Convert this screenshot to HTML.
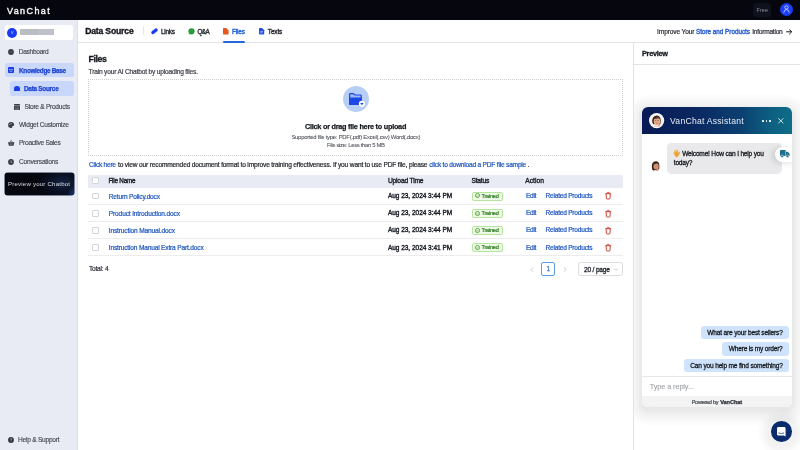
<!DOCTYPE html>
<html><head><meta charset="utf-8">
<style>
*{box-sizing:border-box;margin:0;padding:0}
html,body{width:800px;height:450px;overflow:hidden;background:#fff;font-family:"Liberation Sans",sans-serif;color:#1f2329}
.a{position:absolute}
.t{position:absolute;white-space:pre;line-height:10px;height:10px;font-family:"Liberation Sans",sans-serif}
svg{position:absolute;overflow:visible}

</style></head><body>
<!-- top bar -->
<div class="a" style="left:0;top:0;width:800px;height:19.6px;background:#05060e"></div>
<div class="a" style="left:753.1px;top:3px;width:18px;height:13.5px;border-radius:3px;background:#0f121c"></div>
<div class="a" style="left:779.8px;top:3px;width:13.4px;height:13.4px;border-radius:50%;background:#1b3df5"></div>
<svg style="left:781px;top:4.2px" width="11" height="11" viewBox="0 0 11 11"><circle cx="5.5" cy="3.5" r="1.7" fill="none" stroke="#fff" stroke-width="0.7"/><path d="M2.7 8.6 Q3.6 5.6 5.5 5.4 Q7.4 5.6 8.3 8.6" fill="none" stroke="#fff" stroke-width="0.7"/></svg>

<!-- sidebar -->
<div class="a" style="left:0;top:19.6px;width:78px;height:430.4px;background:#e8ebf4;border-right:0.8px solid #dcdfe8"></div>
<div class="a" style="left:5px;top:25px;width:68px;height:14.7px;background:#fff;border-radius:2.5px"></div>
<div class="a" style="left:6.9px;top:27.5px;width:10.3px;height:10.3px;border-radius:50%;background:#1a3cf0"></div>
<div class="t" style="left:10.5px;top:27.4px;font-size:5px;color:#c4ccff;will-change:transform">v</div>
<div class="a" style="left:20px;top:29px;width:34px;height:6px;background:#b8bcc3"></div>
<div class="a" style="left:38px;top:29px;width:16px;height:6px;background:#bec2c8"></div>

<svg style="left:8.4px;top:49px" width="6" height="6" viewBox="0 0 6 6"><circle cx="3" cy="3" r="2.9" fill="#3a3d44"/><path d="M2.4 3.6 L4.2 1.8" stroke="#8a8d94" stroke-width="0.6"/></svg>
<div class="a" style="left:5px;top:62.7px;width:68.5px;height:14.6px;background:#c8d7fa;border-radius:2.5px"></div>
<svg style="left:8.3px;top:67.3px" width="6" height="6" viewBox="0 0 6 6"><rect x="0" y="0" width="6" height="6" rx="0.8" fill="#1b3fe2"/><path d="M0.8 2.6 H5.2 M1.6 4 L3 4.6 L4.4 4" stroke="#c8d7fa" stroke-width="0.6" fill="none"/></svg>
<div class="a" style="left:10px;top:81px;width:63.5px;height:14.7px;background:#c8d7fa;border-radius:2.5px"></div>
<div class="a" style="left:13.9px;top:86px;width:5.8px;height:4.8px;background:#1b3fe8;border-radius:2.8px 2.8px 0.6px 0.6px"></div>
<svg style="left:13.8px;top:104px" width="6" height="6" viewBox="0 0 6 6"><rect x="0" y="0" width="6" height="6" rx="0.6" fill="#3a3d44"/><path d="M0 1.8 H6 M2 3.5 V6 M4 3.5 V6" stroke="#e8ebf4" stroke-width="0.5" fill="none"/></svg>
<svg style="left:8.3px;top:122px" width="6.2" height="6" viewBox="0 0 6.2 6"><path d="M3.1 0.1 Q6.1 0.1 6.1 3 Q6.1 4 5 4 Q4 4 4.2 5 Q4.4 5.9 3.1 5.9 Q0.1 5.9 0.1 3 Q0.1 0.1 3.1 0.1Z" fill="#3a3d44"/><circle cx="1.8" cy="2.6" r="0.5" fill="#e8ebf4"/><circle cx="3.1" cy="1.6" r="0.5" fill="#e8ebf4"/></svg>
<svg style="left:8.2px;top:140px" width="6.4" height="6" viewBox="0 0 6.4 6"><path d="M0 2.3 H6.4 L5.5 5.8 H0.9 Z" fill="#3a3d44"/><path d="M1.8 2.3 L3.2 0.5 L4.6 2.3" fill="none" stroke="#3a3d44" stroke-width="0.7"/><path d="M2.4 3.4 V4.8 M4 3.4 V4.8" stroke="#e8ebf4" stroke-width="0.45"/></svg>
<svg style="left:8.4px;top:158.7px" width="6" height="6" viewBox="0 0 6 6"><circle cx="3" cy="3" r="2.9" fill="#3a3d44"/><path d="M3 1.4 V3.1 L4.1 3.9" fill="none" stroke="#e8ebf4" stroke-width="0.55"/></svg>
<div class="a" style="left:4.7px;top:172.7px;width:69.3px;height:22px;border-radius:2.5px;background:radial-gradient(ellipse 8px 10px at 70px 22px,#1a3f8a 0%,rgba(20,50,110,0) 100%),radial-gradient(ellipse 26px 16px at 58px 10px,#14223f 0%,#0b1226 50%,rgba(6,8,18,0) 100%),#06070f;box-shadow:0 0 0 0.5px #1a2340"></div>
<svg style="left:7.7px;top:437.1px" width="6" height="6" viewBox="0 0 6 6"><circle cx="3" cy="3" r="2.9" fill="#2f3238"/><path d="M2.2 2.3 Q2.2 1.5 3 1.5 Q3.8 1.5 3.8 2.2 Q3.8 2.8 3 3.1 V3.6" fill="none" stroke="#e8ebf4" stroke-width="0.5"/><circle cx="3" cy="4.4" r="0.32" fill="#e8ebf4"/></svg>

<!-- main header -->
<div class="a" style="left:78px;top:41.8px;width:722px;height:0.8px;background:#e3e3e3"></div>
<div class="a" style="left:142.8px;top:26px;width:0.6px;height:9px;background:#e6e6e6"></div>
<svg style="left:151.4px;top:28px" width="7" height="6.5" viewBox="0 0 7 6.5"><rect x="-0.2" y="1.6" width="7.4" height="3.3" rx="1.6" transform="rotate(-40 3.5 3.25)" fill="#1b3cf0"/></svg>
<svg style="left:188.2px;top:28px" width="7" height="7" viewBox="0 0 7 7"><circle cx="3.5" cy="3.3" r="3.1" fill="#2a9a3a"/><path d="M0.6 6.6 L1.1 4.6 L2.4 5.8Z" fill="#2a9a3a"/></svg>
<svg style="left:223.3px;top:28px" width="5.6" height="6.4" viewBox="0 0 5.6 6.4"><path d="M0 0.6 Q0 0 0.6 0 H3.2 L5.6 2.4 V5.8 Q5.6 6.4 5 6.4 H0.6 Q0 6.4 0 5.8Z" fill="#e8571f"/></svg>
<div class="a" style="left:222.7px;top:41.1px;width:22.3px;height:1.5px;background:#2566d9;border-radius:1px"></div>
<svg style="left:259.2px;top:28px" width="5.2" height="6.4" viewBox="0 0 5.2 6.4"><path d="M0 0.6 Q0 0 0.6 0 H3 L5.2 2.2 V5.8 Q5.2 6.4 4.6 6.4 H0.6 Q0 6.4 0 5.8Z" fill="#1f4fe6"/><path d="M1.2 3.6 H4 M1.2 4.9 H3.4" stroke="#fff" stroke-width="0.5"/></svg>
<svg style="left:786.4px;top:28.6px" width="6.4" height="5.6" viewBox="0 0 6.4 5.6"><path d="M0.2 2.8 H5.6 M3.3 0.4 L5.7 2.8 L3.3 5.2" fill="none" stroke="#15181c" stroke-width="1"/></svg>

<!-- preview panel -->
<div class="a" style="left:633.3px;top:42px;width:0.8px;height:408px;background:#e3e3e3"></div>
<div class="a" style="left:634px;top:64.2px;width:166px;height:0.8px;background:#e3e3e3"></div>

<!-- upload box -->
<div class="a" style="left:88.4px;top:78.6px;width:534.8px;height:77px;border:0.8px dotted #cfcfcf;border-radius:1px"></div>
<div class="a" style="left:342.8px;top:86.2px;width:26.2px;height:26.2px;border-radius:50%;background:#b7cff6"></div>
<svg style="left:349.2px;top:93px" width="14" height="14" viewBox="0 0 14 14"><path d="M0.6 1.3 Q0.6 0.6 1.3 0.6 H4.4 L5.8 2 H11.4 Q12.2 2 12.2 2.8 V10.6 Q12.2 11.4 11.4 11.4 H1.3 Q0.6 11.4 0.6 10.6Z" fill="#9db8f4" stroke="#1c46e6" stroke-width="1.2"/><path d="M2.6 4.4 H12.8 V10.8 Q12.8 12 11.6 12 H1.2 Q0 12 0 10.8 V5.6 Q0.2 4.4 2.6 4.4Z" fill="#1c46e6"/><circle cx="12.9" cy="10.8" r="3.1" fill="#fff"/><path d="M11.2 10 H14.6 L12.9 12.3 Z" fill="#1c46e6"/></svg>

<!-- table -->
<div class="a" style="left:88px;top:175px;width:535px;height:12.6px;background:#e8ebf3;border-radius:1.5px 1.5px 0 0"></div>
<div class="a" style="left:91.8px;top:177.3px;width:6.8px;height:6.8px;border:0.7px solid #d3d5da;border-radius:1px;background:#fff"></div>
<div class="a" style="left:91.8px;top:192.70px;width:6.8px;height:6.8px;border:0.7px solid #d3d5da;border-radius:1px;background:#fff"></div>
<div class="a" style="left:88px;top:204.10px;width:535px;height:0.7px;background:#ececec"></div>
<div class="a" style="left:471.5px;top:191.50px;width:31px;height:9.3px;border:0.9px solid #b3e69c;background:#eefae6;border-radius:1.8px"></div>
<svg style="left:475px;top:193.40px" width="5" height="5" viewBox="0 0 5 5"><circle cx="2.5" cy="2.5" r="2.1" fill="none" stroke="#3b8f2c" stroke-width="0.75"/><path d="M1.5 2.6 L2.2 3.3 L3.5 1.9" fill="none" stroke="#3b8f2c" stroke-width="0.6"/></svg>
<svg style="left:604.8px;top:192.40px" width="6.4" height="7.4" viewBox="0 0 6.4 7.4"><path d="M0.3 1.7 H6.1" stroke="#c93a2c" stroke-width="1"/><path d="M2.1 1.5 V0.8 Q2.1 0.4 2.5 0.4 H3.9 Q4.3 0.4 4.3 0.8 V1.5" fill="none" stroke="#c93a2c" stroke-width="0.8"/><path d="M1.1 2 L1.4 6.4 Q1.5 7 2.1 7 H4.3 Q4.9 7 5 6.4 L5.3 2" fill="none" stroke="#c93a2c" stroke-width="0.95"/></svg>
<div class="a" style="left:91.8px;top:209.85px;width:6.8px;height:6.8px;border:0.7px solid #d3d5da;border-radius:1px;background:#fff"></div>
<div class="a" style="left:88px;top:221.20px;width:535px;height:0.7px;background:#ececec"></div>
<div class="a" style="left:471.5px;top:208.65px;width:31px;height:9.3px;border:0.9px solid #b3e69c;background:#eefae6;border-radius:1.8px"></div>
<svg style="left:475px;top:210.55px" width="5" height="5" viewBox="0 0 5 5"><circle cx="2.5" cy="2.5" r="2.1" fill="none" stroke="#3b8f2c" stroke-width="0.75"/><path d="M1.5 2.6 L2.2 3.3 L3.5 1.9" fill="none" stroke="#3b8f2c" stroke-width="0.6"/></svg>
<svg style="left:604.8px;top:209.55px" width="6.4" height="7.4" viewBox="0 0 6.4 7.4"><path d="M0.3 1.7 H6.1" stroke="#c93a2c" stroke-width="1"/><path d="M2.1 1.5 V0.8 Q2.1 0.4 2.5 0.4 H3.9 Q4.3 0.4 4.3 0.8 V1.5" fill="none" stroke="#c93a2c" stroke-width="0.8"/><path d="M1.1 2 L1.4 6.4 Q1.5 7 2.1 7 H4.3 Q4.9 7 5 6.4 L5.3 2" fill="none" stroke="#c93a2c" stroke-width="0.95"/></svg>
<div class="a" style="left:91.8px;top:227.00px;width:6.8px;height:6.8px;border:0.7px solid #d3d5da;border-radius:1px;background:#fff"></div>
<div class="a" style="left:88px;top:238.30px;width:535px;height:0.7px;background:#ececec"></div>
<div class="a" style="left:471.5px;top:225.80px;width:31px;height:9.3px;border:0.9px solid #b3e69c;background:#eefae6;border-radius:1.8px"></div>
<svg style="left:475px;top:227.70px" width="5" height="5" viewBox="0 0 5 5"><circle cx="2.5" cy="2.5" r="2.1" fill="none" stroke="#3b8f2c" stroke-width="0.75"/><path d="M1.5 2.6 L2.2 3.3 L3.5 1.9" fill="none" stroke="#3b8f2c" stroke-width="0.6"/></svg>
<svg style="left:604.8px;top:226.70px" width="6.4" height="7.4" viewBox="0 0 6.4 7.4"><path d="M0.3 1.7 H6.1" stroke="#c93a2c" stroke-width="1"/><path d="M2.1 1.5 V0.8 Q2.1 0.4 2.5 0.4 H3.9 Q4.3 0.4 4.3 0.8 V1.5" fill="none" stroke="#c93a2c" stroke-width="0.8"/><path d="M1.1 2 L1.4 6.4 Q1.5 7 2.1 7 H4.3 Q4.9 7 5 6.4 L5.3 2" fill="none" stroke="#c93a2c" stroke-width="0.95"/></svg>
<div class="a" style="left:91.8px;top:244.15px;width:6.8px;height:6.8px;border:0.7px solid #d3d5da;border-radius:1px;background:#fff"></div>
<div class="a" style="left:88px;top:255.40px;width:535px;height:0.7px;background:#ececec"></div>
<div class="a" style="left:471.5px;top:242.95px;width:31px;height:9.3px;border:0.9px solid #b3e69c;background:#eefae6;border-radius:1.8px"></div>
<svg style="left:475px;top:244.85px" width="5" height="5" viewBox="0 0 5 5"><circle cx="2.5" cy="2.5" r="2.1" fill="none" stroke="#3b8f2c" stroke-width="0.75"/><path d="M1.5 2.6 L2.2 3.3 L3.5 1.9" fill="none" stroke="#3b8f2c" stroke-width="0.6"/></svg>
<svg style="left:604.8px;top:243.85px" width="6.4" height="7.4" viewBox="0 0 6.4 7.4"><path d="M0.3 1.7 H6.1" stroke="#c93a2c" stroke-width="1"/><path d="M2.1 1.5 V0.8 Q2.1 0.4 2.5 0.4 H3.9 Q4.3 0.4 4.3 0.8 V1.5" fill="none" stroke="#c93a2c" stroke-width="0.8"/><path d="M1.1 2 L1.4 6.4 Q1.5 7 2.1 7 H4.3 Q4.9 7 5 6.4 L5.3 2" fill="none" stroke="#c93a2c" stroke-width="0.95"/></svg>
<!-- pagination -->
<svg style="left:530px;top:267.3px" width="4" height="5" viewBox="0 0 4 5"><path d="M3.2 0.3 L1 2.5 L3.2 4.7" fill="none" stroke="#b0b3b8" stroke-width="0.7"/></svg>
<div class="a" style="left:541.4px;top:262.4px;width:13.2px;height:13.2px;border:0.8px solid #5b9be0;border-radius:2px"></div>
<svg style="left:563px;top:267.3px" width="4" height="5" viewBox="0 0 4 5"><path d="M0.8 0.3 L3 2.5 L0.8 4.7" fill="none" stroke="#b0b3b8" stroke-width="0.7"/></svg>
<div class="a" style="left:578.4px;top:262.4px;width:44.2px;height:14px;border:0.8px solid #dcdcdc;border-radius:2.5px"></div>
<svg style="left:614px;top:267.8px" width="4" height="3" viewBox="0 0 4 3"><path d="M0.3 0.6 L2 2.3 L3.7 0.6" fill="none" stroke="#a0a3a8" stroke-width="0.6"/></svg>

<!-- chat widget -->
<div class="a" style="left:634.1px;top:65px;width:166px;height:385px;overflow:hidden">
<div class="a" style="left:137.3px;top:356px;width:20.8px;height:20.8px;border-radius:50%;box-shadow:0 1px 7px 9px rgba(0,0,0,0.055)"></div>
<div class="a" style="left:7.7px;top:42.4px;width:150.3px;height:299.8px;border-radius:6px;box-shadow:0 3px 7px 11px rgba(0,0,0,0.05),0 3px 4px 3px rgba(0,0,0,0.045)"></div>
</div>
<div class="a" style="left:641.8px;top:107.4px;width:150.3px;height:299.8px;border-radius:6px;background:#fff;"></div>
<div class="a" style="left:641.8px;top:107.4px;width:150.3px;height:26.4px;border-radius:6px 6px 0 0;background:linear-gradient(90deg,#091a55 0%,#0a2760 35%,#0b3f70 65%,#0d5e80 85%,#0f6e88 100%)"></div>
<svg style="left:648.8px;top:113.2px" width="15.2" height="15.2" viewBox="0 0 14 14"><circle cx="7" cy="7" r="7" fill="#fff"/><g transform="translate(1 1) scale(0.857)"><defs><clipPath id="cc"><circle cx="7" cy="7" r="7"/></clipPath></defs><g clip-path="url(#cc)"><rect width="14" height="14" fill="#f4eee9"/><path d="M2.4 9 Q1.8 2.2 7 1.6 Q11.6 1.8 11.4 7.5 L11 11 Q9.5 12 9 10 L5 10 Q4.5 12.5 2.4 9Z" fill="#3a241c"/><ellipse cx="7.4" cy="7.8" rx="3.4" ry="4" fill="#e3ab88"/><path d="M3.6 4.6 Q6.5 2.4 10.6 4.8 Q8.5 4.2 6.6 4.9 Q5 5.5 3.6 4.6Z" fill="#3a241c"/><rect x="5.3" y="6.9" width="1.4" height="0.5" fill="#5a3a2e"/><rect x="7.9" y="6.9" width="1.4" height="0.5" fill="#5a3a2e"/><path d="M6.4 9.6 Q7.3 10.2 8.3 9.6" stroke="#c0505a" stroke-width="0.5" fill="none"/><path d="M8.8 10.4 Q10.4 9.6 10.8 11.6 L10.2 14 H8Z" fill="#e8a58a"/><path d="M3 14 Q4.5 11.6 7 12.2 Q9 12.6 9.6 14Z" fill="#f2d2c0"/></g></g></svg>
<div class="a" style="left:762.2px;top:120.3px;width:1.7px;height:1.7px;border-radius:50%;background:#fff"></div>
<div class="a" style="left:765.8px;top:120.3px;width:1.7px;height:1.7px;border-radius:50%;background:#fff"></div>
<div class="a" style="left:769.4px;top:120.3px;width:1.7px;height:1.7px;border-radius:50%;background:#fff"></div>
<svg style="left:778px;top:118px" width="5.6" height="5.6" viewBox="0 0 5.6 5.6"><path d="M0.3 0.3 L5.3 5.3 M5.3 0.3 L0.3 5.3" stroke="#fff" stroke-width="0.8"/></svg>
<!-- welcome bubble -->
<div class="a" style="left:667px;top:142.8px;width:114.8px;height:31.1px;border-radius:4.5px;background:#e9e9eb"></div>
<svg style="left:649.6px;top:159.6px" width="11.5" height="12.4" viewBox="0 0 14 15"><defs><clipPath id="cc2"><circle cx="7" cy="7" r="7"/></clipPath></defs><g clip-path="url(#cc2)"><rect width="14" height="14" fill="#ffffff"/><path d="M2.2 8.5 Q1.8 2.2 7 1.6 Q11.6 1.8 11.4 7.5 L11 12 Q7 13.5 3 12.6Z" fill="#3a241c"/><ellipse cx="7.4" cy="7.6" rx="3.1" ry="3.9" fill="#d89a76"/><path d="M3.6 4.6 Q6.5 2.4 10.6 4.8 Q8.5 4.2 6.6 4.9 Q5 5.5 3.6 4.6Z" fill="#3a241c"/><rect x="5.3" y="6.9" width="1.4" height="0.5" fill="#5a3a2e"/><rect x="7.9" y="6.9" width="1.4" height="0.5" fill="#5a3a2e"/><path d="M6.4 9.6 Q7.3 10.2 8.3 9.6" stroke="#c0505a" stroke-width="0.5" fill="none"/><path d="M8.8 10.4 Q10.4 9.6 10.8 11.6 L10.2 14 H8Z" fill="#e8a58a"/><path d="M3 14 Q4.5 11.6 7 12.2 Q9 12.6 9.6 14Z" fill="#f2d2c0"/></g></svg>
<svg style="left:673.4px;top:149.2px" width="8.2" height="8.6" viewBox="0 0 7.4 8" preserveAspectRatio="none"><path d="M1.2 5.2 L0.4 3.4 Q0.3 2.8 0.9 2.9 L1.9 4.2 L1.1 1.6 Q1 1 1.6 1.1 L2.7 3.6 L2.3 0.7 Q2.3 0.1 2.9 0.2 L3.7 3.3 L3.8 1 Q3.9 0.5 4.4 0.6 L4.7 3.8 L5.6 2.6 Q6.2 2.2 6.5 2.8 L5.6 5.4 Q4.8 7.8 2.9 7.6 Q1.8 7.2 1.2 5.2Z" fill="#f0a433"/></svg>
<div class="a" style="left:641.8px;top:107.4px;width:150.3px;height:299.8px;overflow:hidden;border-radius:6px"><div class="a" style="left:133.4px;top:39.3px;width:24px;height:15.2px;border-radius:7.6px;background:#fff;box-shadow:-3px 1px 6px rgba(0,0,0,0.13)"></div></div>
<svg style="left:780px;top:149.8px" width="9.6" height="8" viewBox="0 0 9.6 8"><path d="M0 0.7 Q0 0 0.7 0 H5.6 V6 H0.7 Q0 6 0 5.3Z M6 1.8 H7.9 L9.6 3.8 V6 H6Z" fill="#1f6f8f"/><circle cx="2.2" cy="6.3" r="1.3" fill="#1f6f8f" stroke="#fff" stroke-width="0.5"/><circle cx="7.5" cy="6.3" r="1.3" fill="#1f6f8f" stroke="#fff" stroke-width="0.5"/></svg>
<!-- quick replies -->
<div class="a" style="left:701px;top:325.7px;width:87.6px;height:13px;border-radius:3px;background:#cfe4fc"></div>
<div class="a" style="left:722.2px;top:342.4px;width:66.4px;height:13.2px;border-radius:3px;background:#cfe4fc"></div>
<div class="a" style="left:684px;top:358.9px;width:104.6px;height:13.2px;border-radius:3px;background:#cfe4fc"></div>
<!-- input -->
<div class="a" style="left:641.8px;top:376.4px;width:150.3px;height:0.7px;background:#e6e6e6"></div>
<div class="a" style="left:641.8px;top:396.4px;width:150.3px;height:10.8px;background:#f3f3f4;border-radius:0 0 6px 6px"></div>
<!-- launcher -->
<div class="a" style="left:771px;top:421px;width:20.6px;height:20.6px;border-radius:50%;background:#0a2c6c"></div>
<svg style="left:777.2px;top:426.6px" width="8.8" height="9.6" viewBox="0 0 8.8 9.6"><path d="M1.4 0 H7.2 Q8.6 0 8.6 1.4 V9.4 L6.8 8.6 H1.4 Q0 8.6 0 7.2 V1.4 Q0 0 1.4 0Z" fill="#fff"/><path d="M1.5 5.9 Q4.3 7.3 7.1 5.9" fill="none" stroke="#0b2b6e" stroke-width="0.75"/></svg>

<div id="texts" style="position:absolute;left:0;top:0;width:800px;height:450px;will-change:transform">
<div class="t" style="left:7.00px;top:5.70px;font-size:9.0px;font-weight:normal;color:#f6f6f6;letter-spacing:1.390px;-webkit-text-stroke:0.4px #f6f6f6;">VanChat</div>
<div class="t" style="left:756.50px;top:5.30px;font-size:5.4px;font-weight:normal;color:#8e919a;letter-spacing:0.135px;">Free</div>
<div class="t" style="left:18.70px;top:47.00px;font-size:6.6px;font-weight:normal;color:#3f434b;letter-spacing:-0.283px;-webkit-text-stroke:0.12px #3f434b;">Dashboard</div>
<div class="t" style="left:19.00px;top:65.50px;font-size:6.4px;font-weight:bold;color:#1c42d0;letter-spacing:-0.319px;-webkit-text-stroke:0.25px #1c42d0;">Knowledge Base</div>
<div class="t" style="left:24.00px;top:83.60px;font-size:6.4px;font-weight:bold;color:#1c42d0;letter-spacing:-0.260px;-webkit-text-stroke:0.25px #1c42d0;">Data Source</div>
<div class="t" style="left:24.40px;top:102.00px;font-size:6.6px;font-weight:normal;color:#3f434b;letter-spacing:-0.283px;-webkit-text-stroke:0.12px #3f434b;">Store &amp; Products</div>
<div class="t" style="left:19.00px;top:120.00px;font-size:6.6px;font-weight:normal;color:#3f434b;letter-spacing:-0.234px;-webkit-text-stroke:0.12px #3f434b;">Widget Customize</div>
<div class="t" style="left:19.00px;top:138.30px;font-size:6.6px;font-weight:normal;color:#3f434b;letter-spacing:-0.294px;-webkit-text-stroke:0.12px #3f434b;">Proactive Sales</div>
<div class="t" style="left:19.00px;top:156.70px;font-size:6.6px;font-weight:normal;color:#3f434b;letter-spacing:-0.238px;-webkit-text-stroke:0.12px #3f434b;">Conversations</div>
<div class="t" style="left:8.00px;top:179.10px;font-size:6.1px;font-weight:normal;color:#d9dce3;letter-spacing:0.197px;">Preview your Chatbot</div>
<div class="t" style="left:18.00px;top:435.00px;font-size:6.6px;font-weight:normal;color:#3f434b;letter-spacing:-0.248px;-webkit-text-stroke:0.12px #3f434b;">Help &amp; Support</div>
<div class="t" style="left:85.20px;top:26.20px;font-size:8.6px;font-weight:bold;color:#14171c;letter-spacing:-0.166px;-webkit-text-stroke:0.35px #14171c;">Data Source</div>
<div class="t" style="left:160.90px;top:26.80px;font-size:6.4px;font-weight:normal;color:#2b2f36;letter-spacing:-0.230px;-webkit-text-stroke:0.38px #2b2f36;">Links</div>
<div class="t" style="left:197.50px;top:26.80px;font-size:6.3px;font-weight:normal;color:#2b2f36;letter-spacing:-0.606px;-webkit-text-stroke:0.38px #2b2f36;">Q&amp;A</div>
<div class="t" style="left:232.10px;top:26.80px;font-size:6.4px;font-weight:normal;color:#2766d6;letter-spacing:-0.175px;-webkit-text-stroke:0.38px #2766d6;">Files</div>
<div class="t" style="left:267.80px;top:26.80px;font-size:6.4px;font-weight:normal;color:#2b2f36;letter-spacing:-0.105px;-webkit-text-stroke:0.38px #2b2f36;">Texts</div>
<div class="t" style="left:657.10px;top:26.80px;font-size:6.6px;font-weight:normal;color:#2b2f36;letter-spacing:-0.133px;-webkit-text-stroke:0.2px #2b2f36;">Improve Your</div>
<div class="t" style="left:696.00px;top:26.90px;font-size:6.3px;font-weight:normal;color:#2a5fd0;letter-spacing:0.006px;-webkit-text-stroke:0.38px #2a5fd0;">Store and Products</div>
<div class="t" style="left:752.20px;top:26.80px;font-size:6.6px;font-weight:normal;color:#2b2f36;letter-spacing:-0.240px;-webkit-text-stroke:0.2px #2b2f36;">Information</div>
<div class="t" style="left:642.00px;top:48.70px;font-size:7.3px;font-weight:bold;color:#171a1f;letter-spacing:-0.266px;-webkit-text-stroke:0.3px #171a1f;">Preview</div>
<div class="t" style="left:88.40px;top:53.90px;font-size:8.8px;font-weight:bold;color:#14171c;letter-spacing:-0.362px;-webkit-text-stroke:0.3px #14171c;">Files</div>
<div class="t" style="left:88.60px;top:67.10px;font-size:6.6px;font-weight:normal;color:#3a3e46;letter-spacing:-0.182px;-webkit-text-stroke:0.2px #3a3e46;">Train your AI Chatbot by uploading files.</div>
<div class="t" style="left:305.00px;top:121.60px;font-size:7.3px;font-weight:bold;color:#171a1f;letter-spacing:-0.253px;-webkit-text-stroke:0.25px #171a1f;">Click or drag file here to upload</div>
<div class="t" style="left:291.40px;top:132.00px;font-size:5.9px;font-weight:normal;color:#50545b;letter-spacing:-0.245px;-webkit-text-stroke:0.08px #50545b;">Supported file type: PDF(.pdf) Excel(.csv) Word(.docx)</div>
<div class="t" style="left:327.00px;top:139.80px;font-size:5.9px;font-weight:normal;color:#50545b;letter-spacing:-0.326px;-webkit-text-stroke:0.08px #50545b;">File size: Less than 5 MB</div>
<div class="t" style="left:89.00px;top:160.30px;font-size:6.6px;font-weight:normal;color:#1d55bd;letter-spacing:-0.259px;-webkit-text-stroke:0.2px #1d55bd;">Click here</div>
<div class="t" style="left:118.00px;top:160.30px;font-size:6.6px;font-weight:normal;color:#23262c;letter-spacing:-0.162px;-webkit-text-stroke:0.2px #23262c;">to view our recommended document format to improve training effectiveness. If you want to use PDF file, please</div>
<div class="t" style="left:429.20px;top:160.30px;font-size:6.6px;font-weight:normal;color:#1d55bd;letter-spacing:-0.206px;-webkit-text-stroke:0.2px #1d55bd;">click to download a PDF file sample</div>
<div class="t" style="left:527.50px;top:160.30px;font-size:6.6px;font-weight:normal;color:#23262c;letter-spacing:0.000px;-webkit-text-stroke:0.2px #23262c;">.</div>
<div class="t" style="left:108.40px;top:175.90px;font-size:6.3px;font-weight:normal;color:#1d2129;letter-spacing:-0.188px;-webkit-text-stroke:0.38px #1d2129;">File Name</div>
<div class="t" style="left:387.90px;top:175.90px;font-size:6.7px;font-weight:normal;color:#1d2129;letter-spacing:-0.185px;-webkit-text-stroke:0.38px #1d2129;">Upload Time</div>
<div class="t" style="left:471.40px;top:175.90px;font-size:6.7px;font-weight:normal;color:#1d2129;letter-spacing:-0.214px;-webkit-text-stroke:0.38px #1d2129;">Status</div>
<div class="t" style="left:525.30px;top:175.90px;font-size:6.7px;font-weight:normal;color:#1d2129;letter-spacing:0.001px;-webkit-text-stroke:0.38px #1d2129;">Action</div>
<div class="t" style="left:108.80px;top:191.80px;font-size:6.6px;font-weight:normal;color:#1d55bd;letter-spacing:-0.193px;-webkit-text-stroke:0.2px #1d55bd;">Return Policy.docx</div>
<div class="t" style="left:387.90px;top:191.10px;font-size:6.5px;font-weight:normal;color:#1d2129;letter-spacing:-0.020px;-webkit-text-stroke:0.38px #1d2129;">Aug 23, 2024 3:44 PM</div>
<div class="t" style="left:481.50px;top:190.70px;font-size:5.6px;font-weight:normal;color:#2c7a20;letter-spacing:-0.244px;-webkit-text-stroke:0.2px #2c7a20;">Trained</div>
<div class="t" style="left:526.00px;top:191.10px;font-size:6.6px;font-weight:normal;color:#1d55bd;letter-spacing:-0.325px;-webkit-text-stroke:0.2px #1d55bd;">Edit</div>
<div class="t" style="left:545.50px;top:191.10px;font-size:6.6px;font-weight:normal;color:#1d55bd;letter-spacing:-0.233px;-webkit-text-stroke:0.2px #1d55bd;">Related Products</div>
<div class="t" style="left:108.80px;top:208.95px;font-size:6.6px;font-weight:normal;color:#1d55bd;letter-spacing:-0.149px;-webkit-text-stroke:0.2px #1d55bd;">Product Introduction.docx</div>
<div class="t" style="left:387.90px;top:208.25px;font-size:6.5px;font-weight:normal;color:#1d2129;letter-spacing:-0.020px;-webkit-text-stroke:0.38px #1d2129;">Aug 23, 2024 3:44 PM</div>
<div class="t" style="left:481.50px;top:207.85px;font-size:5.6px;font-weight:normal;color:#2c7a20;letter-spacing:-0.244px;-webkit-text-stroke:0.2px #2c7a20;">Trained</div>
<div class="t" style="left:526.00px;top:208.25px;font-size:6.6px;font-weight:normal;color:#1d55bd;letter-spacing:-0.325px;-webkit-text-stroke:0.2px #1d55bd;">Edit</div>
<div class="t" style="left:545.50px;top:208.25px;font-size:6.6px;font-weight:normal;color:#1d55bd;letter-spacing:-0.233px;-webkit-text-stroke:0.2px #1d55bd;">Related Products</div>
<div class="t" style="left:108.80px;top:226.10px;font-size:6.6px;font-weight:normal;color:#1d55bd;letter-spacing:-0.156px;-webkit-text-stroke:0.2px #1d55bd;">Instruction Manual.docx</div>
<div class="t" style="left:387.90px;top:225.40px;font-size:6.5px;font-weight:normal;color:#1d2129;letter-spacing:-0.020px;-webkit-text-stroke:0.38px #1d2129;">Aug 23, 2024 3:44 PM</div>
<div class="t" style="left:481.50px;top:225.00px;font-size:5.6px;font-weight:normal;color:#2c7a20;letter-spacing:-0.244px;-webkit-text-stroke:0.2px #2c7a20;">Trained</div>
<div class="t" style="left:526.00px;top:225.40px;font-size:6.6px;font-weight:normal;color:#1d55bd;letter-spacing:-0.325px;-webkit-text-stroke:0.2px #1d55bd;">Edit</div>
<div class="t" style="left:545.50px;top:225.40px;font-size:6.6px;font-weight:normal;color:#1d55bd;letter-spacing:-0.233px;-webkit-text-stroke:0.2px #1d55bd;">Related Products</div>
<div class="t" style="left:108.80px;top:243.25px;font-size:6.6px;font-weight:normal;color:#1d55bd;letter-spacing:-0.179px;-webkit-text-stroke:0.2px #1d55bd;">Instruction Manual Extra Part.docx</div>
<div class="t" style="left:387.90px;top:242.55px;font-size:6.5px;font-weight:normal;color:#1d2129;letter-spacing:-0.020px;-webkit-text-stroke:0.38px #1d2129;">Aug 23, 2024 3:41 PM</div>
<div class="t" style="left:481.50px;top:242.15px;font-size:5.6px;font-weight:normal;color:#2c7a20;letter-spacing:-0.244px;-webkit-text-stroke:0.2px #2c7a20;">Trained</div>
<div class="t" style="left:526.00px;top:242.55px;font-size:6.6px;font-weight:normal;color:#1d55bd;letter-spacing:-0.325px;-webkit-text-stroke:0.2px #1d55bd;">Edit</div>
<div class="t" style="left:545.50px;top:242.55px;font-size:6.6px;font-weight:normal;color:#1d55bd;letter-spacing:-0.233px;-webkit-text-stroke:0.2px #1d55bd;">Related Products</div>
<div class="t" style="left:88.90px;top:264.10px;font-size:6.6px;font-weight:normal;color:#2b2f36;letter-spacing:-0.224px;-webkit-text-stroke:0.2px #2b2f36;">Total: 4</div>
<div class="t" style="left:546.40px;top:264.20px;font-size:6.6px;font-weight:normal;color:#3a78d2;letter-spacing:0.000px;-webkit-text-stroke:0.25px #3a78d2;">1</div>
<div class="t" style="left:584.00px;top:264.60px;font-size:6.6px;font-weight:normal;color:#23272d;letter-spacing:-0.188px;-webkit-text-stroke:0.3px #23272d;">20 / page</div>
<div class="t" style="left:670.00px;top:116.10px;font-size:8.6px;font-weight:normal;color:#e6ebf3;letter-spacing:0.257px;">VanChat Assistant</div>
<div class="t" style="left:682.20px;top:148.90px;font-size:6.6px;font-weight:normal;color:#1a1d22;letter-spacing:-0.208px;-webkit-text-stroke:0.3px #1a1d22;">Welcome! How can I help you</div>
<div class="t" style="left:673.80px;top:157.90px;font-size:6.6px;font-weight:normal;color:#1a1d22;letter-spacing:-0.222px;-webkit-text-stroke:0.3px #1a1d22;">today?</div>
<div class="t" style="left:707.20px;top:327.90px;font-size:6.6px;font-weight:normal;color:#16191e;letter-spacing:-0.179px;-webkit-text-stroke:0.28px #16191e;">What are your best sellers?</div>
<div class="t" style="left:728.80px;top:344.40px;font-size:6.6px;font-weight:normal;color:#16191e;letter-spacing:-0.208px;-webkit-text-stroke:0.28px #16191e;">Where is my order?</div>
<div class="t" style="left:690.30px;top:360.90px;font-size:6.6px;font-weight:normal;color:#16191e;letter-spacing:-0.191px;-webkit-text-stroke:0.28px #16191e;">Can you help me find something?</div>
<div class="t" style="left:649.80px;top:381.80px;font-size:7.3px;font-weight:normal;color:#9a9da3;letter-spacing:-0.093px;-webkit-text-stroke:0.08px #9a9da3;">Type a reply...</div>
<div class="t" style="left:691.70px;top:397.00px;font-size:5.6px;font-weight:normal;color:#4a4f57;letter-spacing:-0.305px;-webkit-text-stroke:0.22px #4a4f57;">Powered by</div>
<div class="t" style="left:720.20px;top:397.10px;font-size:5.6px;font-weight:bold;color:#2b3038;letter-spacing:-0.065px;-webkit-text-stroke:0.25px #2b3038;">VanChat</div>
</div>
</body></html>
